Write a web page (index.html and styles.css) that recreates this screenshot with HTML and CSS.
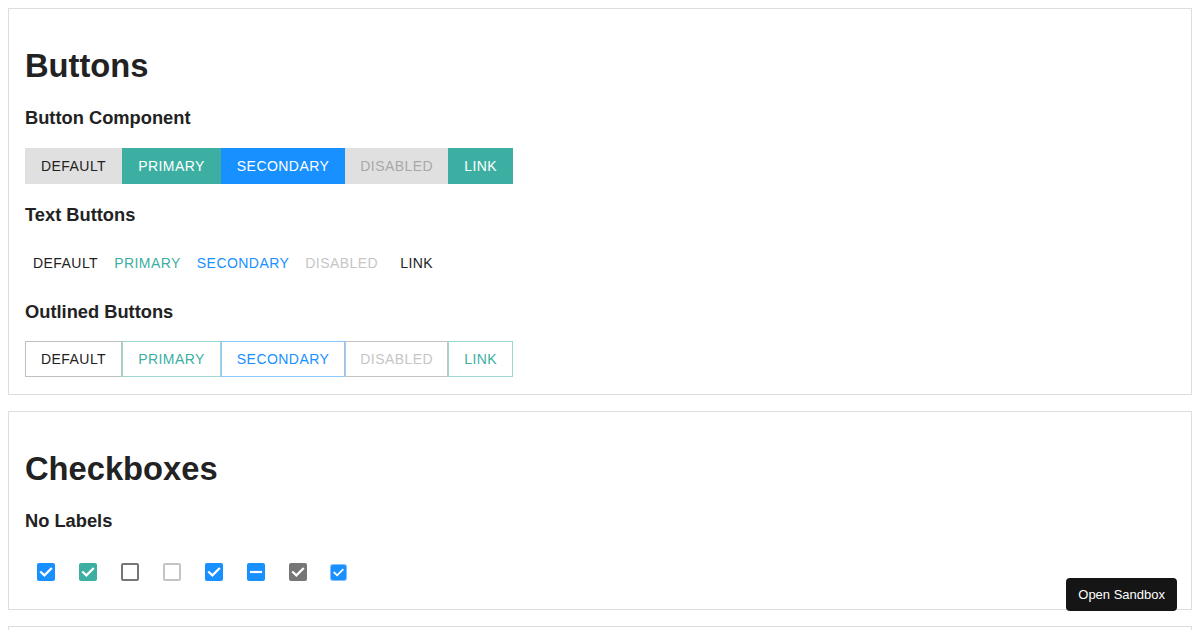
FILE: index.html
```html
<!DOCTYPE html>
<html lang="en">
<head>
<meta charset="utf-8">
<title>Buttons</title>
<link rel="stylesheet" href="styles.css">
</head>
<body>
<section class="card buttons-card">
  <h1 class="title">Buttons</h1>
  <h3 class="subtitle">Button Component</h3>
  <div class="row">
    <button class="btn contained default">Default</button>
    <button class="btn contained primary">Primary</button>
    <button class="btn contained secondary">Secondary</button>
    <button class="btn contained disabled">Disabled</button>
    <button class="btn contained link">Link</button>
  </div>
  <h3 class="subtitle">Text Buttons</h3>
  <div class="row">
    <button class="btn text default">Default</button>
    <button class="btn text primary">Primary</button>
    <button class="btn text secondary">Secondary</button>
    <button class="btn text disabled">Disabled</button>
    <button class="btn text link">Link</button>
  </div>
  <h3 class="subtitle">Outlined Buttons</h3>
  <div class="row">
    <button class="btn outlined default">Default</button>
    <button class="btn outlined primary">Primary</button>
    <button class="btn outlined secondary">Secondary</button>
    <button class="btn outlined disabled">Disabled</button>
    <button class="btn outlined link">Link</button>
  </div>
</section>

<section class="card">
  <h1 class="title">Checkboxes</h1>
  <h3 class="subtitle">No Labels</h3>
  <div class="checks">
    <span class="cb-wrap"><span class="cb filled blue"><svg viewBox="0 0 18 18"><polyline points="4,9.2 7.4,12.4 14,5.8"/></svg></span></span>
    <span class="cb-wrap"><span class="cb filled teal"><svg viewBox="0 0 18 18"><polyline points="4,9.2 7.4,12.4 14,5.8"/></svg></span></span>
    <span class="cb-wrap"><span class="cb empty dark"></span></span>
    <span class="cb-wrap"><span class="cb empty light"></span></span>
    <span class="cb-wrap"><span class="cb filled blue"><svg viewBox="0 0 18 18"><polyline points="4,9.2 7.4,12.4 14,5.8"/></svg></span></span>
    <span class="cb-wrap"><span class="cb filled blue"><svg viewBox="0 0 18 18"><line x1="4" y1="9" x2="14" y2="9"/></svg></span></span>
    <span class="cb-wrap"><span class="cb filled gray"><svg viewBox="0 0 18 18"><polyline points="4,9.2 7.4,12.4 14,5.8"/></svg></span></span>
    <span class="cb-wrap small"><span class="cb filled blue sm"><svg viewBox="0 0 18 18"><polyline points="4,9.2 7.4,12.4 14,5.8"/></svg></span></span>
  </div>
</section>

<section class="card next"></section>

<button class="sandbox">Open Sandbox</button>
</body>
</html>
```

FILE: styles.css
```css
* { box-sizing: border-box; }
html, body { background: #fff; }
body {
  margin: 8px;
  font-family: "Liberation Sans", Arial, sans-serif;
  color: #222;
}
.card {
  border: 1px solid #dedede;
  padding: 16px;
  margin-bottom: 16px;
  background: #fff;
}
.buttons-card { padding-bottom: 17px; }
.card.next { height: 120px; }
.title {
  font-size: 32.7px;
  line-height: 37px;
  font-weight: 700;
  margin: 22px 0 0;
  color: #222;
}
.subtitle {
  font-size: 18.3px;
  line-height: 22px;
  font-weight: 700;
  margin: 20px 0 19px;
  color: #222;
}
.title + .subtitle { margin-top: 23px; }
.row {
  display: flex;
  align-items: stretch;
  height: 36px;
}
.row + .subtitle + .row + .subtitle { margin-bottom: 18px; }
.btn {
  font-family: "Liberation Sans", Arial, sans-serif;
  font-size: 14px;
  letter-spacing: 0.45px;
  text-transform: uppercase;
  height: 36px;
  padding: 0 16px;
  border: 0;
  margin: 0;
  background: transparent;
  border-radius: 0;
  cursor: pointer;
  line-height: 36px;
}
.contained.default { background: #e0e0e0; color: #222; }
.contained.primary { background: #3cafa2; color: #fff; }
.contained.secondary { background: #1890ff; color: #fff; }
.contained.disabled { background: #e0e0e0; color: #a8a8a8; padding: 0 15px; }
.contained.link { background: #3cafa2; color: #fff; }

.text { padding: 0 8px; }
.text.default { color: #222; }
.text.primary { color: #3cafa2; }
.text.secondary { color: #1890ff; }
.text.disabled { color: #c6c6c6; }
.text.link { color: #222; padding: 0 14px; }

.outlined { border: 1px solid; line-height: 34px; padding: 0 15px; }
.outlined.default { border-color: #bfbfbf; color: #222; }
.outlined.primary { border-color: #9ed7d0; color: #3cafa2; }
.outlined.secondary { border-color: #8cc7ff; color: #1890ff; }
.outlined.disabled { border-color: #c4c4c4; color: #c6c6c6; padding: 0 14px; }
.outlined.link { border-color: #9ed7d0; color: #3cafa2; }

.checks {
  display: flex;
  align-items: center;
  height: 42px;
}
.cb-wrap {
  display: flex;
  align-items: center;
  justify-content: center;
  width: 42px;
  height: 42px;
}
.cb-wrap.small { width: 38px; }
.cb {
  display: block;
  width: 18px;
  height: 18px;
  border-radius: 2px;
}
.cb svg {
  display: block;
  width: 18px;
  height: 18px;
  fill: none;
  stroke: #fff;
  stroke-width: 2.2;
  stroke-linecap: square;
}
.cb.sm { width: 15px; height: 15px; box-shadow: 0 0 0 1px #7fbfff; }
.cb.sm svg { width: 15px; height: 15px; stroke-width: 2.2; }
.filled.blue { background: #1890ff; }
.filled.teal { background: #3cafa2; }
.filled.gray { background: #767676; }
.empty.dark { border: 2px solid #767676; }
.empty.light { border: 2px solid #c4c4c4; }

.sandbox {
  position: fixed;
  right: 23px;
  bottom: 19px;
  height: 33px;
  padding: 0 12px;
  background: #151515;
  color: #fff;
  border: 0;
  border-radius: 4px;
  font-family: "Liberation Sans", Arial, sans-serif;
  font-size: 13px;
}
```
